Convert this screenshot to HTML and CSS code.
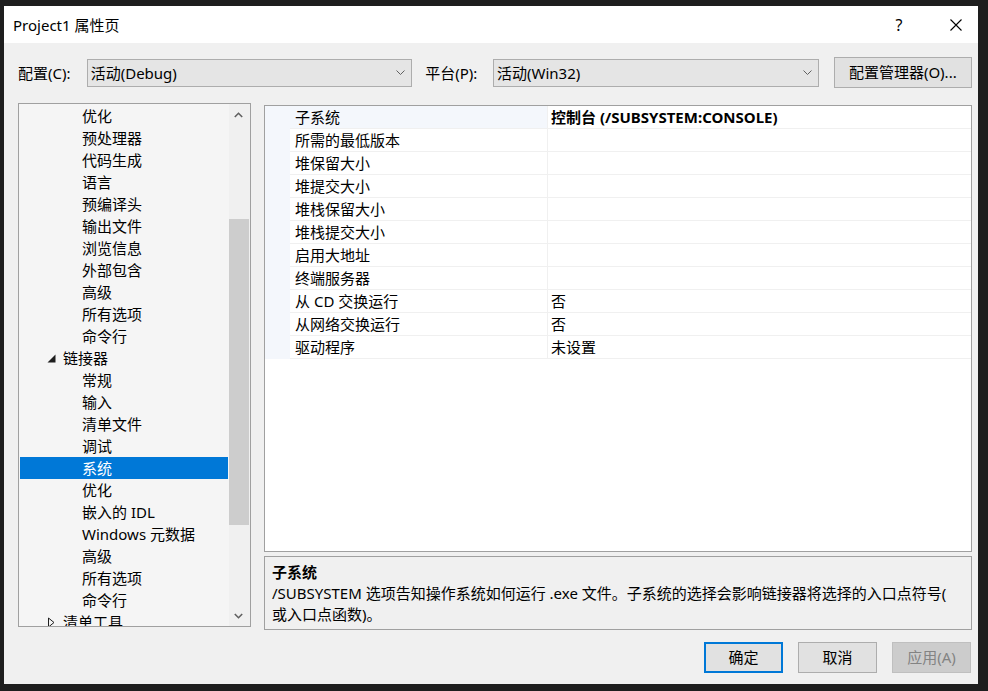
FILE: index.html
```html
<!DOCTYPE html>
<html lang="zh-CN">
<head>
    <meta charset="UTF-8">
    <meta name="viewport" content="width=device-width, initial-scale=1.0">
    <title>Project1 属性页</title>
    <link rel="stylesheet" href="styles.css">
</head>
<body>
    <div class="dialog">
        <div class="titlebar">
            <span class="title">Project1 属性页</span>
            <span class="caption-btn help">?</span>
            <span class="caption-btn close">
                <svg width="12" height="12" viewBox="0 0 12 12"><path d="M0.5 0.5 L11.5 11.5 M11.5 0.5 L0.5 11.5" stroke="#000" stroke-width="1.1" fill="none"/></svg>
            </span>
        </div>

        <div class="content">
            <div class="config-row">
                <span class="field-label">配置(C):</span>
                <div class="combo">
                    <span>活动(Debug)</span>
                    <svg class="chevron" width="9" height="5" viewBox="0 0 9 5"><path d="M0.5 0.5 L4.5 4.5 L8.5 0.5" stroke="#606060" fill="none"/></svg>
                </div>
                <span class="field-label platform">平台(P):</span>
                <div class="combo">
                    <span>活动(Win32)</span>
                    <svg class="chevron" width="9" height="5" viewBox="0 0 9 5"><path d="M0.5 0.5 L4.5 4.5 L8.5 0.5" stroke="#606060" fill="none"/></svg>
                </div>
                <button class="btn manager">配置管理器(O)...</button>
            </div>

            <div class="main">
                <div class="tree">
                    <ul class="tree-list">
                        <li class="leaf">优化</li>
                        <li class="leaf">预处理器</li>
                        <li class="leaf">代码生成</li>
                        <li class="leaf">语言</li>
                        <li class="leaf">预编译头</li>
                        <li class="leaf">输出文件</li>
                        <li class="leaf">浏览信息</li>
                        <li class="leaf">外部包含</li>
                        <li class="leaf">高级</li>
                        <li class="leaf">所有选项</li>
                        <li class="leaf">命令行</li>
                        <li class="node">
                            <svg class="twisty" width="9" height="9" viewBox="0 0 9 9"><path d="M8.5 0.5 L8.5 8.5 L0.5 8.5 Z" fill="#1e1e1e"/></svg>
                            链接器
                        </li>
                        <li class="leaf">常规</li>
                        <li class="leaf">输入</li>
                        <li class="leaf">清单文件</li>
                        <li class="leaf">调试</li>
                        <li class="leaf selected">系统</li>
                        <li class="leaf">优化</li>
                        <li class="leaf">嵌入的 IDL</li>
                        <li class="leaf">Windows 元数据</li>
                        <li class="leaf">高级</li>
                        <li class="leaf">所有选项</li>
                        <li class="leaf">命令行</li>
                        <li class="node">
                            <svg class="twisty" width="9" height="11" viewBox="0 0 9 11"><path d="M1.5 1 L7 5.5 L1.5 10 Z" stroke="#1e1e1e" fill="none"/></svg>
                            清单工具
                        </li>
                    </ul>
                    <div class="scrollbar">
                        <div class="sb-arrow">
                            <svg width="9" height="6" viewBox="0 0 9 6"><path d="M0.8 5 L4.5 1.3 L8.2 5" stroke="#606060" stroke-width="1.6" fill="none"/></svg>
                        </div>
                        <div class="sb-track"><div class="sb-thumb"></div></div>
                        <div class="sb-arrow">
                            <svg width="9" height="6" viewBox="0 0 9 6"><path d="M0.8 1 L4.5 4.7 L8.2 1" stroke="#606060" stroke-width="1.6" fill="none"/></svg>
                        </div>
                    </div>
                </div>

                <div class="right-pane">
                    <div class="prop-grid">
                        <div class="prop-row current"><span class="gutter"></span><span class="name">子系统</span><span class="value strong">控制台 (/SUBSYSTEM:CONSOLE)</span></div>
                        <div class="prop-row"><span class="gutter"></span><span class="name">所需的最低版本</span><span class="value"></span></div>
                        <div class="prop-row"><span class="gutter"></span><span class="name">堆保留大小</span><span class="value"></span></div>
                        <div class="prop-row"><span class="gutter"></span><span class="name">堆提交大小</span><span class="value"></span></div>
                        <div class="prop-row"><span class="gutter"></span><span class="name">堆栈保留大小</span><span class="value"></span></div>
                        <div class="prop-row"><span class="gutter"></span><span class="name">堆栈提交大小</span><span class="value"></span></div>
                        <div class="prop-row"><span class="gutter"></span><span class="name">启用大地址</span><span class="value"></span></div>
                        <div class="prop-row"><span class="gutter"></span><span class="name">终端服务器</span><span class="value"></span></div>
                        <div class="prop-row"><span class="gutter"></span><span class="name">从 CD 交换运行</span><span class="value">否</span></div>
                        <div class="prop-row"><span class="gutter"></span><span class="name">从网络交换运行</span><span class="value">否</span></div>
                        <div class="prop-row"><span class="gutter"></span><span class="name">驱动程序</span><span class="value">未设置</span></div>
                    </div>
                    <div class="desc">
                        <div class="desc-title">子系统</div>
                        <div class="desc-text">/SUBSYSTEM 选项告知操作系统如何运行 .exe 文件。子系统的选择会影响链接器将选择的入口点符号(<br>或入口点函数)。</div>
                    </div>
                </div>
            </div>

            <div class="actions">
                <button class="btn default">确定</button>
                <button class="btn">取消</button>
                <button class="btn" disabled>应用(A)</button>
            </div>
        </div>
    </div>
</body>
</html>
```

FILE: styles.css
```css
body {
    margin: 0;
    padding: 0;
    width: 988px;
    height: 691px;
    overflow: hidden;
    background-color: #1e1e1e;
    font-family: "Noto Sans", "Noto Sans CJK SC", sans-serif;
    font-size: 15px;
    color: #000;
}

.dialog {
    margin: 6px 0 0 4px;
    width: 974px;
    height: 678px;
    display: flex;
    flex-direction: column;
    background-color: #f0f0f0;
}

/* title bar */
.titlebar {
    height: 37px;
    background-color: #fff;
    display: flex;
    align-items: center;
}

.title {
    padding-left: 9px;
    line-height: 20px;
}

.caption-btn {
    width: 46px;
    height: 37px;
    display: flex;
    align-items: center;
    justify-content: center;
}

.help {
    margin-left: auto;
    margin-right: 11px;
    font-size: 16px;
}

.close {
    margin-right: -1px;
}

/* body */
.content {
    flex: 1;
    padding: 14px 6px 0 14px;
}

.config-row {
    display: flex;
    align-items: center;
    height: 31px;
}

.field-label {
    width: 69px;
    line-height: 20px;
}

.field-label.platform {
    width: 68px;
    margin-left: 13px;
}

.combo {
    width: 322px;
    height: 26px;
    border: 1px solid #adadad;
    background-color: #e5e5e5;
    display: flex;
    align-items: center;
    padding-left: 3px;
}

.combo span {
    flex: 1;
    line-height: 20px;
}

.combo .chevron {
    margin-right: 6px;
}

.btn {
    font-family: inherit;
    font-size: 15px;
    color: #000;
    height: 31px;
    width: 79px;
    padding: 0 0 2px 0;
    border: 1px solid #adadad;
    background-color: #e1e1e1;
}

.btn.manager {
    width: 139px;
    margin-left: 15px;
}

.btn.default {
    border: 2px solid #0078d7;
}

.btn:disabled {
    background-color: #cccccc;
    border-color: #bfbfbf;
    color: #838383;
}

/* tree + grid */
.main {
    display: flex;
    margin-top: 15px;
    height: 527px;
}

.tree {
    width: 231px;
    height: 522px;
    border: 1px solid #a0a0a0;
    background-color: #f5f5f5;
    display: flex;
    overflow: hidden;
}

.tree-list {
    list-style: none;
    margin: 0;
    padding: 1px 1px 0 1px;
    width: 208px;
    overflow: hidden;
}

.tree-list li {
    height: 22px;
    line-height: 22px;
    white-space: nowrap;
    display: flex;
    align-items: center;
}

.tree-list .leaf {
    padding-left: 62px;
}

.tree-list .node {
    padding-left: 27px;
}

.tree-list .twisty {
    margin-right: 7px;
}

.tree-list .selected {
    background-color: #0078d7;
    color: #fff;
}

.scrollbar {
    width: 21px;
    display: flex;
    flex-direction: column;
    background-color: #f0f0f0;
}

.sb-arrow {
    height: 21px;
    display: flex;
    align-items: center;
    justify-content: center;
    padding-right: 2px;
}

.sb-track {
    flex: 1;
}

.sb-thumb {
    margin-top: 94px;
    width: 20px;
    height: 306px;
    background-color: #cdcdcd;
}

.right-pane {
    margin-left: 13px;
    margin-top: 2px;
    width: 708px;
    display: flex;
    flex-direction: column;
    gap: 4px;
}

.prop-grid {
    height: 445px;
    border: 1px solid #a0a0a0;
    background-color: #fff;
}

.prop-row {
    display: grid;
    grid-template-columns: 25px 258px 1fr;
    height: 23px;
}

.prop-row span {
    line-height: 22px;
    border-bottom: 1px solid #f0f0f0;
    white-space: nowrap;
}

.prop-row .gutter {
    background-color: #f4f7fc;
    border-bottom-color: #f4f7fc;
}

.prop-row .name {
    padding-left: 5px;
    border-right: 1px solid #f0f0f0;
}

.prop-row .value {
    padding-left: 3px;
}

.prop-row.current .name {
    background-color: #f4f7fc;
}

.value.strong {
    font-weight: bold;
}

.desc {
    height: 67px;
    border: 1px solid #a0a0a0;
    background-color: #f0f0f0;
    padding: 5px 7px 0 7px;
    line-height: 21px;
}

.desc-title {
    font-weight: bold;
}

/* bottom buttons */
.actions {
    display: flex;
    justify-content: flex-end;
    gap: 15px;
    margin-top: 12px;
    padding-right: 1px;
}
```
